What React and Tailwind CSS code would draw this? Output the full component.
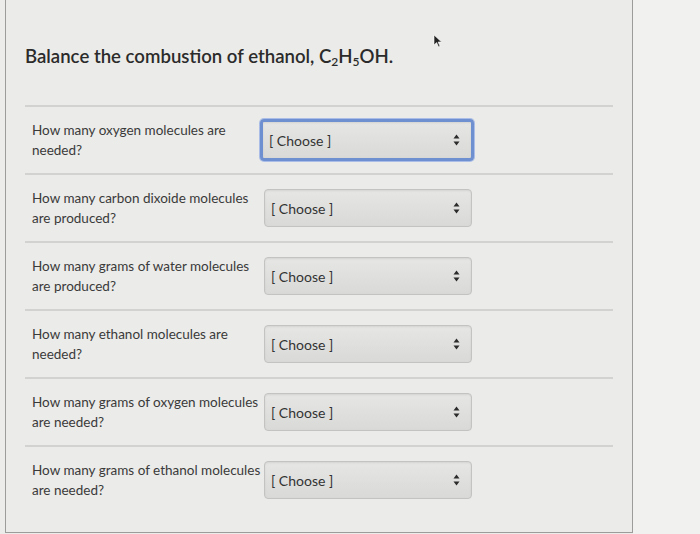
const questions = [
  'How many oxygen molecules are needed?',
  'How many carbon dixoide molecules are produced?',
  'How many grams of water molecules are produced?',
  'How many ethanol molecules are needed?',
  'How many grams of oxygen molecules are needed?',
  'How many grams of ethanol molecules are needed?',
]

function Arrows() {
  return (
    <svg width="7" height="12" viewBox="0 0 7 12" className="shrink-0">
      <path d="M3.5 0.5 L6.5 4.5 L0.5 4.5 Z" fill="#2b2b2b" />
      <path d="M3.5 11.5 L6.5 7.5 L0.5 7.5 Z" fill="#2b2b2b" />
    </svg>
  )
}

function Select({ focused }) {
  return (
    <div
      className={`flex items-center justify-between rounded-[4px] pl-[6px] pr-[11px] bg-gradient-to-b from-[#e6e6e5] to-[#d9d9d8] shadow-[inset_0_1px_2px_rgba(0,0,0,0.08)] ${
        focused
          ? 'border-[3px] border-[#6e8fd0] ring-1 ring-[#a9bde6] w-[214px] h-[42px] -ml-[4px]'
          : 'border border-[#c3c3c2] h-[38px] w-[208px]'
      }`}
    >
      <span className="text-[14px] text-[#333]">[ Choose ]</span>
      <Arrows />
    </div>
  )
}

export default function App() {
  return (
    <div
      className="w-[700px] h-[534px] bg-[#ecedeb] flex overflow-hidden relative"
      style={{ fontFamily: 'Lato, "Liberation Sans", sans-serif' }}
    >
      <div className="ml-[5px] w-[628px] h-[533px] border border-[#9c9d9b] border-t-0 bg-[#ebebe9] flex flex-col">
        <h1 className="pt-[43px] pl-[19px] text-[18.6px] leading-[26px] font-semibold text-[#2b2b2b] h-[105px]">
          Balance the combustion of ethanol, C<sub className="text-[12px]">2</sub>H<sub className="text-[12px]">5</sub>OH.
        </h1>
        <div className="mx-[19px] flex flex-col">
          {questions.map((q, i) => (
            <div key={i} className="flex items-center h-[68px] pl-[7px] border-t-2 border-[#d2d2d0]">
              <p className="w-[232px] shrink-0 text-[13.5px] leading-[20px] text-[#3a3a3a]">{q}</p>
              <Select focused={i === 0} />
            </div>
          ))}
        </div>
      </div>
      <div className="flex-1 bg-[#f1f1f0]" />
      <svg width="10" height="14" viewBox="0 0 10 14" className="absolute left-[433px] top-[34px]">
        <path d="M1 1 L1 11 L3.6 8.6 L5.6 13 L7 12.3 L5.1 8 L8.6 8 Z" fill="#222" stroke="#fff" strokeWidth="0.6" />
      </svg>
    </div>
  )
}
